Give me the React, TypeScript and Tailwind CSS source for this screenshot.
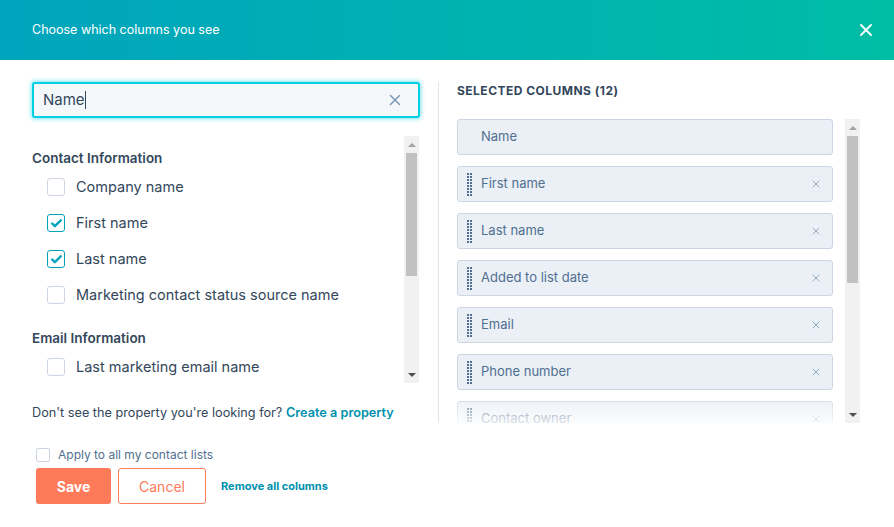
import { X, Check } from 'lucide-react';

const font = { fontFamily: 'Inter, "Noto Sans", sans-serif' };

interface Section {
  title: string;
  items: { label: string; checked: boolean }[];
}

const sections: Section[] = [
  {
    title: 'Contact Information',
    items: [
      { label: 'Company name', checked: false },
      { label: 'First name', checked: true },
      { label: 'Last name', checked: true },
      { label: 'Marketing contact status source name', checked: false },
    ],
  },
  {
    title: 'Email Information',
    items: [{ label: 'Last marketing email name', checked: false }],
  },
];

const selected = ['First name', 'Last name', 'Added to list date', 'Email', 'Phone number', 'Contact owner'];

function Scrollbar({ thumbTop, thumbHeight }: { thumbTop: number; thumbHeight: number }) {
  return (
    <div className="w-[15px] shrink-0 bg-[#f1f1f1] flex flex-col">
      <div className="h-[17px] flex items-center justify-center">
        <div className="w-0 h-0 border-l-[4px] border-r-[4px] border-b-[4px] border-l-transparent border-r-transparent border-b-[#a3a3a3]" />
      </div>
      <div className="flex-1 relative">
        <div className="absolute left-[2px] right-[2px] bg-[#c1c1c1]" style={{ top: thumbTop, height: thumbHeight }} />
      </div>
      <div className="h-[17px] flex items-center justify-center">
        <div className="w-0 h-0 border-l-[4px] border-r-[4px] border-t-[4px] border-l-transparent border-r-transparent border-t-[#505050]" />
      </div>
    </div>
  );
}

function Checkbox({ checked }: { checked: boolean }) {
  return (
    <span
      className={`w-[18px] h-[18px] rounded-[3px] border bg-white flex items-center justify-center shrink-0 ${
        checked ? 'border-[#00a4bd]' : 'border-[#cbd6e2]'
      }`}
    >
      {checked && <Check size={13} strokeWidth={4.5} className="text-[#00a4bd]" />}
    </span>
  );
}

function DragHandle() {
  return (
    <div className="grid grid-cols-2 gap-x-[1px] gap-y-[1px] w-[5px]">
      {Array.from({ length: 16 }).map((_, i) => (
        <span key={i} className="w-[2px] h-[2px] bg-[#516f90]" />
      ))}
    </div>
  );
}

export default function App() {
  return (
    <div className="w-[894px] h-[527px] bg-white flex flex-col overflow-hidden" style={font}>
      {/* Header */}
      <div className="h-[60px] shrink-0 bg-gradient-to-r from-[#00a4bd] to-[#00bda5] flex items-center justify-between pl-[32px] pr-[18px]">
        <h1 className="text-white text-[12.5px] pt-[1px]">Choose which columns you see</h1>
        <X size={20} strokeWidth={2.2} className="text-white" />
      </div>

      {/* Body */}
      <div className="flex pt-[22px] pl-[32px]">
        {/* Left */}
        <div className="w-[388px] flex flex-col">
          <div className="h-[36px] rounded-[3px] border-2 border-[#00d0e4] bg-[#f5f8fa] flex items-center justify-between pl-[9px] pr-[14px] shadow-[0_0_4px_1px_rgba(0,208,228,0.5)]">
            <span className="text-[15px] text-[#33475b] flex items-center">
              Name<span className="w-[1px] h-[18px] bg-[#33475b]" />
            </span>
            <X size={18} strokeWidth={2} className="text-[#7c98b6]" />
          </div>

          <div className="mt-[18px] h-[247px] flex">
            <div className="flex-1 overflow-hidden pt-[13px]">
              {sections.map((s, si) => (
                <div key={s.title} className={si > 0 ? 'mt-[16px]' : ''}>
                  <h2 className="text-[13.5px] font-semibold text-[#33475b] leading-[18px]">{s.title}</h2>
                  <ul className="mt-[2px]">
                    {s.items.map((item) => (
                      <li key={item.label} className="h-[36px] flex items-center gap-[11px] pl-[15px]">
                        <Checkbox checked={item.checked} />
                        <span className="text-[14.5px] text-[#33475b]">{item.label}</span>
                      </li>
                    ))}
                  </ul>
                </div>
              ))}
            </div>
            <div className="mr-[1px] flex">
              <Scrollbar thumbTop={0} thumbHeight={123} />
            </div>
          </div>

          <p className="mt-[20px] text-[12.7px] text-[#33475b]">
            Don't see the property you're looking for?{' '}
            <a className="font-semibold text-[#0091ae]">Create a property</a>
          </p>
        </div>

        {/* Divider */}
        <div className="w-[1px] bg-[#dfe3eb] ml-[18px] h-[341px]" />

        {/* Right */}
        <div className="flex-1 pl-[18px] pr-[34px]">
          <h2 className="text-[12px] font-bold tracking-[0.04em] text-[#33475b] leading-[18px]">
            SELECTED COLUMNS (12)
          </h2>
          <div className="mt-[19px] h-[304px] flex gap-[12px]">
            <div className="flex-1 relative overflow-hidden">
              <div className="h-[36px] rounded-[3px] border border-[#cbd6e2] bg-[#eaf0f6] flex items-center pl-[23px]">
                <span className="text-[13px] text-[#516f90]">Name</span>
              </div>
              {selected.map((label) => (
                <div
                  key={label}
                  className="mt-[11px] h-[36px] rounded-[3px] border border-[#cbd6e2] bg-[#eaf0f6] flex items-center pl-[9px] pr-[10px]"
                >
                  <DragHandle />
                  <span className="ml-[9px] flex-1 text-[13px] text-[#516f90]">{label}</span>
                  <X size={12} strokeWidth={1.6} className="text-[#7c98b6]" />
                </div>
              ))}
              <div className="absolute left-0 right-0 bottom-0 h-[30px] bg-gradient-to-b from-white/0 to-white/80" />
            </div>
            <Scrollbar thumbTop={0} thumbHeight={147} />
          </div>
        </div>
      </div>

      {/* Footer */}
      <div className="pl-[36px] mt-[23px]">
        <label className="flex items-center gap-[8px]">
          <span className="w-[14px] h-[14px] rounded-[2px] border border-[#cbd6e2] bg-white" />
          <span className="text-[12px] text-[#516f90]">Apply to all my contact lists</span>
        </label>
        <div className="mt-[4px] flex items-center">
          <button className="w-[75px] h-[36px] rounded-[3px] bg-[#ff7a59] text-white text-[14px] font-bold">
            Save
          </button>
          <button className="ml-[7px] w-[88px] h-[36px] rounded-[3px] border border-[#ff7a59] bg-white text-[#ff7a59] text-[14px]">
            Cancel
          </button>
          <a className="ml-[15px] text-[11px] font-bold text-[#0091ae]">Remove all columns</a>
        </div>
      </div>
    </div>
  );
}
